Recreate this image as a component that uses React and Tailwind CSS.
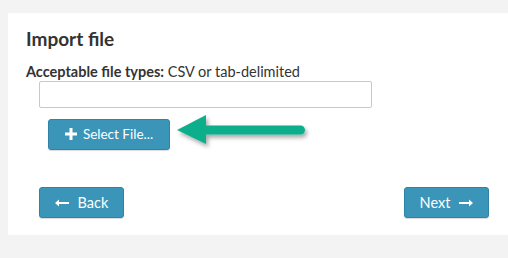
import React from "react";

function PlusIcon() {
  return (
    <svg width="12" height="12" viewBox="0 0 12 12" className="shrink-0">
      <path d="M4.5 0h3v4.5H12v3H7.5V12h-3V7.5H0v-3h4.5z" fill="white" />
    </svg>
  );
}

function ArrowLeft() {
  return (
    <svg width="14" height="8" viewBox="0 0 14 8">
      <path d="M0 4 L4 0.5 V3 H14 V5 H4 V7.5 Z" fill="white" />
    </svg>
  );
}

function ArrowRight() {
  return (
    <svg width="14" height="8" viewBox="0 0 14 8">
      <path d="M14 4 L10 0.5 V3 H0 V5 H10 V7.5 Z" fill="white" />
    </svg>
  );
}

function CalloutArrow() {
  return (
    <svg width="140" height="40" viewBox="0 0 140 40" className="shrink-0">
      <defs>
        <filter id="shadow" x="-10%" y="-20%" width="130%" height="170%">
          <feDropShadow dx="2" dy="3" stdDeviation="2" floodColor="#000" floodOpacity="0.35" />
        </filter>
      </defs>
      <g filter="url(#shadow)" fill="#0aae8c">
        <path d="M1 17 L30 2 L30 31 Z" />
        <rect x="26" y="12.5" width="103" height="9" rx="4.5" />
      </g>
    </svg>
  );
}

export default function App() {
  const btn =
    "flex items-center justify-center h-[31px] rounded-[3px] bg-[#3a95b9] border border-[#2f84a6] text-white shadow-[0_1px_1px_rgba(0,0,0,0.15)]";

  return (
    <div
      className="w-[508px] h-[258px] bg-[#f3f3f3] pt-[13px] pl-[8px] overflow-hidden"
      style={{ fontFamily: "Lato, 'Liberation Sans', sans-serif" }}
    >
      <div className="w-[500px] h-[222px] bg-white pl-[18px] pt-[14px]">
        <h1 className="text-[19px] leading-[24px] font-bold text-[#333]">Import file</h1>
        <p className="mt-[13px] text-[14.5px] leading-[16px] text-[#333]">
          <span className="font-bold">Acceptable file types:</span> CSV or tab-delimited
        </p>
        <div className="ml-[13px] mt-[1px] w-[333px] h-[27px] border border-[#c8c8c8] rounded-[2px] bg-white" />
        <div className="flex items-center ml-[22px] mt-[7px]">
          <button className={btn + " w-[122px] gap-[6px] text-[13.5px]"}>
            <PlusIcon />
            <span>Select File...</span>
          </button>
          <div className="ml-[6px] -mt-[2px]">
            <CalloutArrow />
          </div>
        </div>
        <div className="flex justify-between mt-[34px] ml-[13px] w-[450px]">
          <button className={btn + " w-[85px] gap-[9px] text-[14.5px]"}>
            <ArrowLeft />
            <span>Back</span>
          </button>
          <button className={btn + " w-[85px] gap-[9px] text-[14.5px]"}>
            <span>Next</span>
            <ArrowRight />
          </button>
        </div>
      </div>
    </div>
  );
}
